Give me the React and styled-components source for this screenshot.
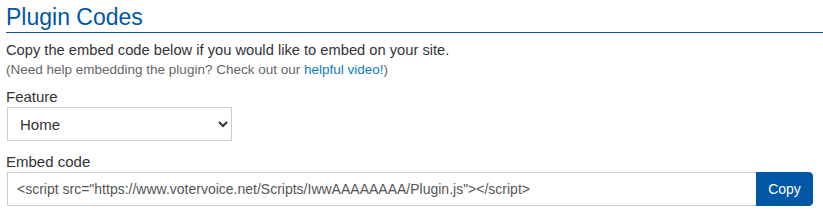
import React from "react";
import styled, { createGlobalStyle } from "styled-components";

const GlobalStyle = createGlobalStyle`
  body {
    margin: 0;
    background: #fff;
    font-family: "Liberation Sans", Arial, Helvetica, sans-serif;
    color: #333;
  }
`;

export default function App() {
  return (
    <>
      <GlobalStyle />
      <Page>
        <Title>Plugin Codes</Title>
        <Intro>Copy the embed code below if you would like to embed on your site.</Intro>
        <Help>
          (Need help embedding the plugin? Check out our <a href="#">helpful video!</a>)
        </Help>
        <Field $gap={10}>
          <Label>Feature</Label>
          <Select defaultValue="home">
            <option value="home">Home</option>
          </Select>
        </Field>
        <Field $gap={12}>
          <Label>Embed code</Label>
          <InputGroup>
            <CodeInput
              readOnly
              value={'<script src="https://www.votervoice.net/Scripts/IwwAAAAAAAA/Plugin.js"></script>'}
            />
            <CopyButton>Copy</CopyButton>
          </InputGroup>
        </Field>
      </Page>
    </>
  );
}

const Page = styled.div`
  padding: 4px 0 0 6px;
`;

const Title = styled.h2`
  margin: 0;
  padding-bottom: 2px;
  font-size: 23px;
  font-weight: normal;
  line-height: 26px;
  color: #0057a5;
  border-bottom: 1px solid #0057a5;
`;

const Intro = styled.p`
  margin: 8px 0 0;
  font-size: 14.7px;
  line-height: 18px;
  color: #333;
`;

const Help = styled.p`
  margin: 3px 0 0;
  font-size: 13.5px;
  line-height: 16px;
  color: #666;

  a {
    color: #0a7cc2;
    text-decoration: none;
  }
`;

const Field = styled.div`
  margin-top: ${(p) => p.$gap}px;
`;

const Label = styled.div`
  font-size: 15px;
  line-height: 18px;
  color: #333;
  margin-bottom: 1px;
`;

const Select = styled.select`
  display: block;
  margin-left: 1px;
  width: 225px;
  height: 34px;
  padding: 0 8px;
  font-family: inherit;
  font-size: 15px;
  color: #333;
  background: #fff;
  border: 1px solid #ccc;
  border-radius: 0;
`;

const InputGroup = styled.div`
  display: flex;
  margin-left: 1px;
  width: 806px;
  height: 34px;
`;

const CodeInput = styled.input`
  flex: 1;
  min-width: 0;
  padding: 0 9px;
  font-family: inherit;
  font-size: 14px;
  color: #555;
  border: 1px solid #ccc;
  border-right: none;
  border-radius: 0;
  outline: none;
`;

const CopyButton = styled.button`
  width: 57px;
  font-family: inherit;
  font-size: 14px;
  color: #fff;
  background: #0057a5;
  border: 1px solid #0057a5;
  border-radius: 0 4px 4px 0;
  cursor: pointer;
`;
